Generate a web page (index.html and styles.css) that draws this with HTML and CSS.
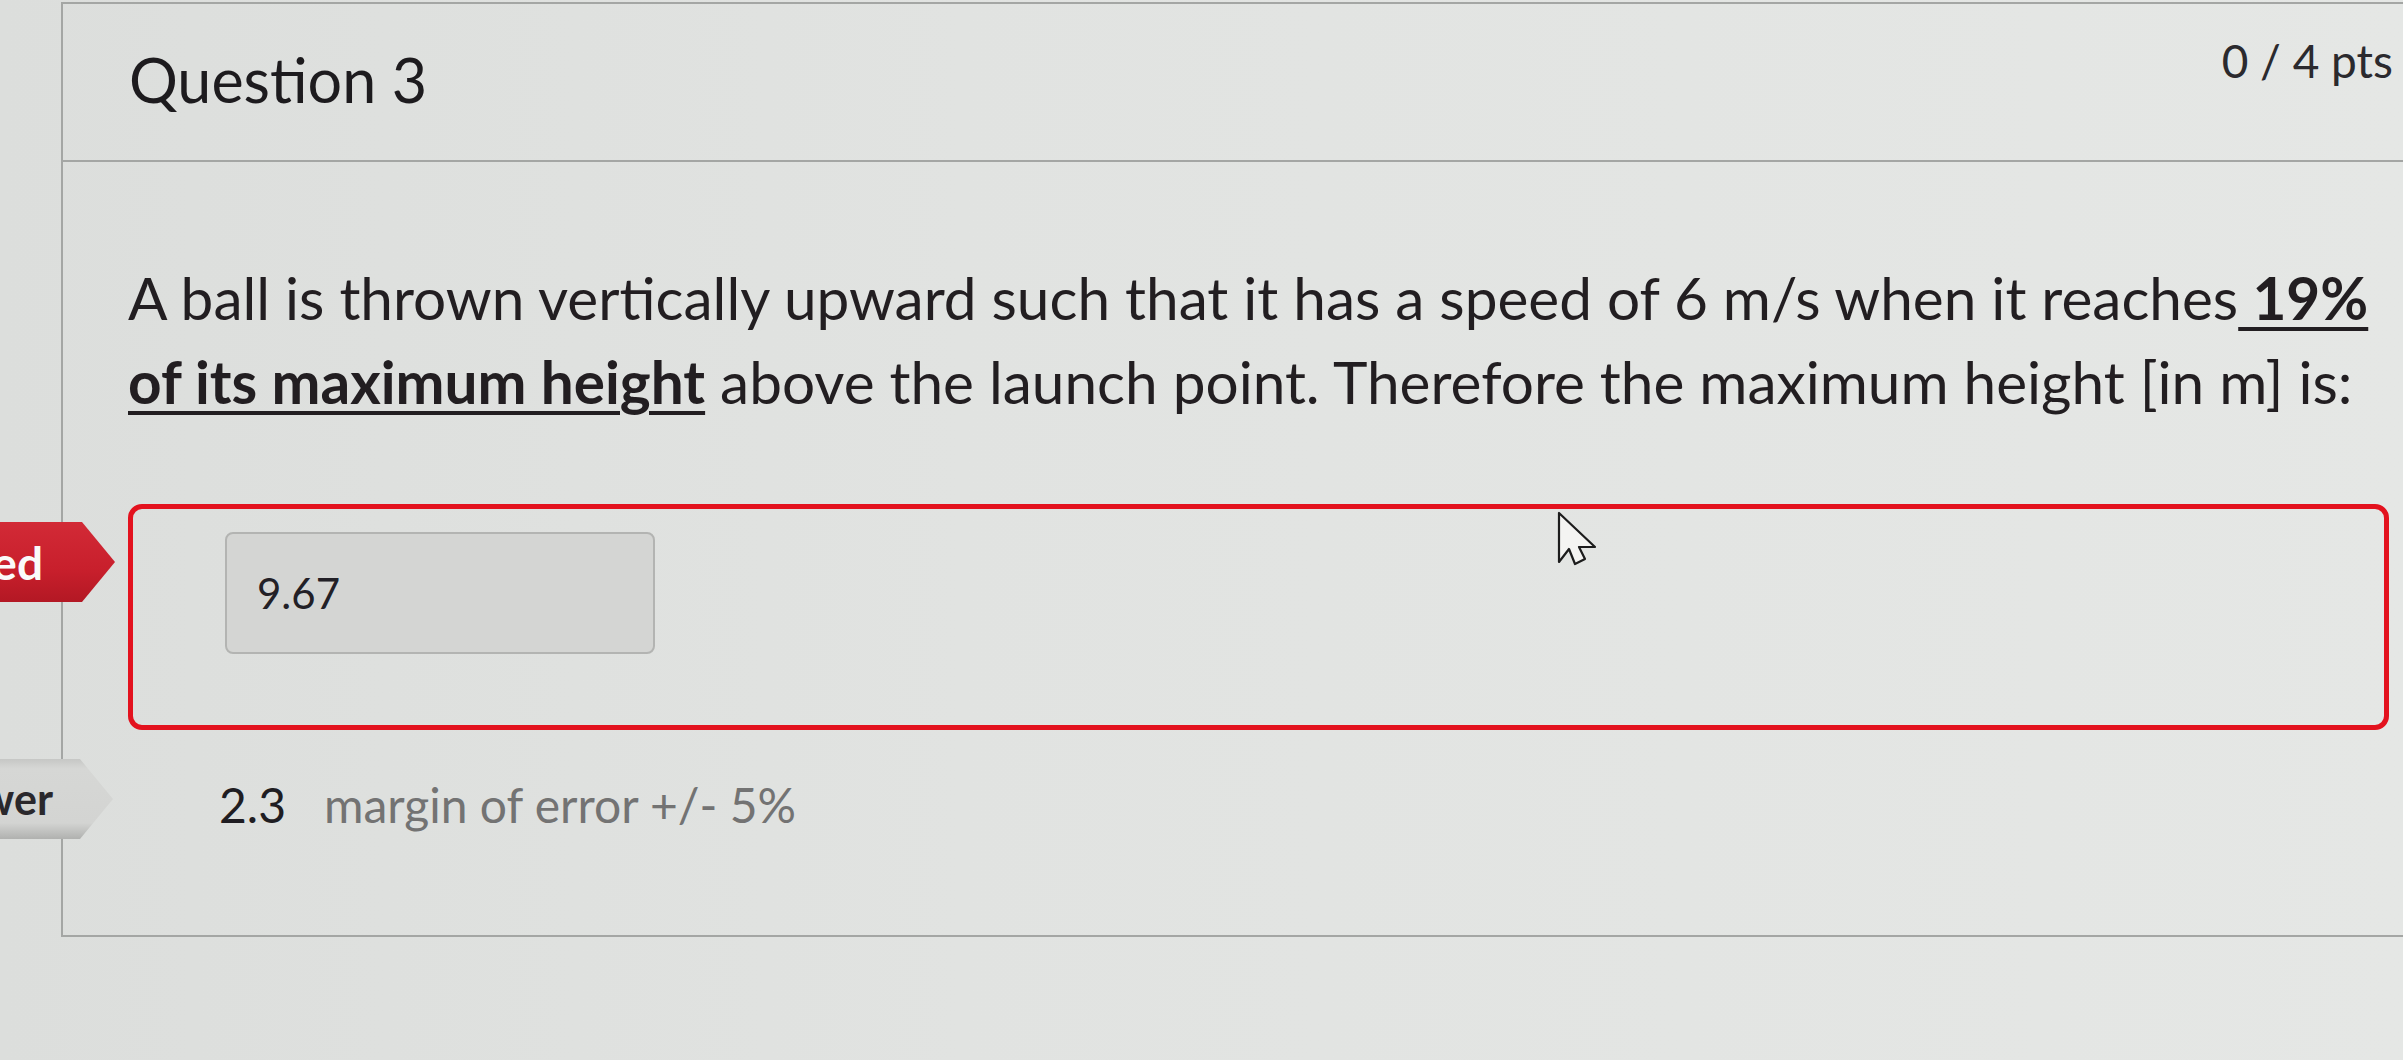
FILE: index.html
```html
<!DOCTYPE html>
<html lang="en">
<head>
<meta charset="utf-8">
<title>Question 3</title>
<link rel="stylesheet" href="styles.css">
</head>
<body>
<div class="page">
  <div class="gutter"></div>
  <div class="question">
    <div class="q-header">
      <h2 class="q-title">Question 3</h2>
      <div class="q-points">0 / 4 pts</div>
    </div>
    <div class="q-body">
      <p class="q-text">A ball is thrown vertically upward such that it has a speed of 6 m/s when it reaches<u class="emph"> 19% of its maximum height</u> above the launch point. Therefore the maximum height [in m] is:</p>
      <div class="answer answer-wrong">
        <div class="arrow arrow-wrong">You Answered</div>
        <div class="answer-input">9.67</div>
      </div>
      <div class="answer answer-correct">
        <div class="arrow arrow-correct">Correct Answer</div>
        <span class="answer-value">2.3</span>
        <span class="answer-margin">margin of error +/- 5%</span>
      </div>
    </div>
  </div>
  <svg class="cursor" width="44" height="60" viewBox="0 0 44 60">
    <path d="M2 2 L2 51 L12 38 L18 53 L28 48 L22 36 L38 36 Z" fill="#f4f4f2" stroke="#1c1c1c" stroke-width="2.2" stroke-linejoin="round"/>
  </svg>
</div>
</body>
</html>
```
FILE: styles.css
```css
html, body {
  margin: 0;
  padding: 0;
}
body {
  width: 2403px;
  height: 1060px;
  overflow: hidden;
  background: linear-gradient(90deg, #dcdedc 0%, #e1e3e1 40%, #e5e7e5 100%);
  font-family: Lato, "Noto Sans", sans-serif;
  color: #221e21;
}
.page {
  position: relative;
  display: flex;
  align-items: flex-start;
  height: 1060px;
}
.gutter {
  width: 61px;
  flex: none;
}
.question {
  flex: 1;
  margin-top: 2px;
  border: 2px solid #a4a6a4;
  border-right: none;
  box-sizing: border-box;
}
.q-header {
  display: flex;
  justify-content: space-between;
  align-items: flex-start;
  height: 158px;
  box-sizing: border-box;
  border-bottom: 2px solid #a4a6a4;
  padding: 0 10px 0 66px;
}
.q-title {
  margin: 39px 0 0 0;
  font-size: 61px;
  line-height: 1.2;
  font-weight: 400;
  color: #1d1b1e;
}
.q-points {
  margin-top: 29px;
  font-size: 46px;
  line-height: 1.2;
  color: #2b2a2e;
}
.q-body {
  padding: 93px 0 101px 65px;
}
.q-text {
  margin: 0;
  font-size: 58.5px;
  line-height: 84px;
}
.emph {
  font-weight: 700;
  text-decoration-thickness: 4px;
  text-underline-offset: 7px;
}
.answer {
  position: relative;
}
.answer-wrong {
  margin: 81px 14px 0 0;
  border: 5px solid #e3121e;
  border-radius: 14px;
  padding: 23px 0 71px 92px;
}
.answer-input {
  width: 430px;
  height: 122px;
  box-sizing: border-box;
  border: 2px solid #b3b4b2;
  border-radius: 8px;
  background: #d4d5d3;
  padding-left: 30px;
  display: flex;
  align-items: center;
  font-size: 42px;
  color: #222026;
}
.arrow {
  position: absolute;
  height: 80px;
  box-sizing: border-box;
  display: flex;
  align-items: center;
  white-space: nowrap;
  font-weight: 700;
  clip-path: polygon(0 0, calc(100% - 33px) 0, 100% 50%, calc(100% - 33px) 100%, 0 100%);
}
.arrow-wrong {
  top: 13px;
  right: calc(100% + 18px);
  padding: 0 72px 0 40px;
  font-size: 46px;
  color: #fafafa;
  background: linear-gradient(180deg, #d22a36 0%, #c81f2c 60%, #b31824 100%);
}
.arrow-correct {
  top: -17px;
  right: calc(100% + 15px);
  padding: 0 60px 0 40px;
  font-size: 43px;
  color: #2a282c;
  background: linear-gradient(180deg, #c6c7c5 0%, #d6d7d5 12%, #d3d4d2 80%, #b0b1af 100%);
}
.answer-correct {
  margin-top: 46px;
  padding-left: 91px;
  display: flex;
  align-items: baseline;
  gap: 38px;
  font-size: 48px;
  line-height: 1.2;
}
.answer-value {
  color: #1f1d22;
}
.answer-margin {
  color: #737373;
}
.cursor {
  position: absolute;
  left: 1557px;
  top: 511px;
}
```
